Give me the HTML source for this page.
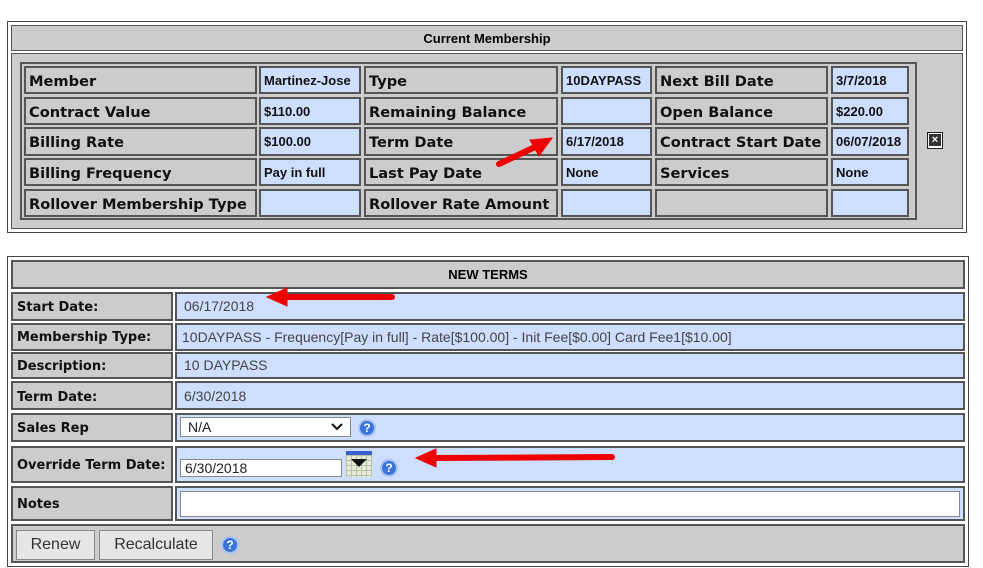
<!DOCTYPE html><html><head><style>
body{margin:0;width:983px;height:568px;background:#fff;position:relative;overflow:hidden;font-family:"Liberation Sans",Arial,sans-serif}
div{position:absolute;box-sizing:border-box}
.g{background:#ccc;border:2px solid #555}
.v{background:#cddeff;border:2px solid #555}
.L{font-family:"DejaVu Sans",Verdana,sans-serif;font-weight:bold;font-size:14.6px;color:#111;padding-left:3px;line-height:27px;white-space:nowrap}
.V{font-weight:bold;font-size:13px;color:#111;padding-left:3px;line-height:25px;white-space:nowrap}
.l2{font-family:"DejaVu Sans",Verdana,sans-serif;font-weight:bold;font-size:13px;color:#111;padding-left:4px;white-space:nowrap}
.v2{font-size:14px;color:#444;padding-left:7px;white-space:nowrap}
.q{width:18px;height:18px;border-radius:50%;background:#3b73d6;border:2px solid #a9c4f0;color:#fff;font-size:12px;font-weight:bold;text-align:center;line-height:14px}
.btn{background:#e6e6e6;border:1px solid #888;font-size:16px;color:#333;text-align:center;line-height:28px}
</style></head><body>
<div style="left:7px;top:21px;width:960px;height:212px;border:1px solid #444"></div>
<div class="g" style="left:11px;top:25px;width:952px;height:26px;border-width:1px;text-align:center;font-size:13px;font-weight:bold;line-height:25px">Current Membership</div>
<div class="g" style="left:11px;top:53px;width:952px;height:176px;border-width:1px"></div>
<div style="left:20px;top:62px;width:897px;height:158px;border:2px solid #555"></div>

<div class="g L" style="left:24px;top:66px;width:233px;height:28px">Member</div>
<div class="v V" style="left:259px;top:66px;width:102px;height:28px">Martinez-Jose</div>
<div class="g L" style="left:364px;top:66px;width:194px;height:28px">Type</div>
<div class="v V" style="left:561px;top:66px;width:91px;height:28px">10DAYPASS</div>
<div class="g L" style="left:655px;top:66px;width:173px;height:28px">Next Bill Date</div>
<div class="v V" style="left:831px;top:66px;width:78px;height:28px">3/7/2018</div>

<div class="g L" style="left:24px;top:97px;width:233px;height:28px">Contract Value</div>
<div class="v V" style="left:259px;top:97px;width:102px;height:28px">$110.00</div>
<div class="g L" style="left:364px;top:97px;width:194px;height:28px">Remaining Balance</div>
<div class="v V" style="left:561px;top:97px;width:91px;height:28px"></div>
<div class="g L" style="left:655px;top:97px;width:173px;height:28px">Open Balance</div>
<div class="v V" style="left:831px;top:97px;width:78px;height:28px">$220.00</div>

<div class="g L" style="left:24px;top:127px;width:233px;height:29px">Billing Rate</div>
<div class="v V" style="left:259px;top:127px;width:102px;height:29px">$100.00</div>
<div class="g L" style="left:364px;top:127px;width:194px;height:29px">Term Date</div>
<div class="v V" style="left:561px;top:127px;width:91px;height:29px">6/17/2018</div>
<div class="g L" style="left:655px;top:127px;width:173px;height:29px">Contract Start Date</div>
<div class="v V" style="left:831px;top:127px;width:78px;height:29px">06/07/2018</div>

<div class="g L" style="left:24px;top:158px;width:233px;height:28px">Billing Frequency</div>
<div class="v V" style="left:259px;top:158px;width:102px;height:28px">Pay in full</div>
<div class="g L" style="left:364px;top:158px;width:194px;height:28px">Last Pay Date</div>
<div class="v V" style="left:561px;top:158px;width:91px;height:28px">None</div>
<div class="g L" style="left:655px;top:158px;width:173px;height:28px">Services</div>
<div class="v V" style="left:831px;top:158px;width:78px;height:28px">None</div>

<div class="g L" style="left:24px;top:189px;width:233px;height:28px">Rollover Membership Type</div>
<div class="v V" style="left:259px;top:189px;width:102px;height:28px"></div>
<div class="g L" style="left:364px;top:189px;width:194px;height:28px">Rollover Rate Amount</div>
<div class="v V" style="left:561px;top:189px;width:91px;height:28px"></div>
<div class="g L" style="left:655px;top:189px;width:173px;height:28px"></div>
<div class="v V" style="left:831px;top:189px;width:78px;height:28px"></div>

<div style="left:927px;top:132px;width:16px;height:17px;background:#fff;border:1px solid #222"><div style="left:1px;top:1px;width:12px;height:12px;background:#333;color:#fff;font-size:11px;font-weight:bold;line-height:12px;text-align:center">×</div></div>

<div style="left:7px;top:256px;width:962px;height:311px;border:1px solid #444"></div>
<div class="g" style="left:11px;top:260px;width:954px;height:29px;text-align:center;font-size:13px;font-weight:bold;line-height:25px">NEW TERMS</div>

<div class="g l2" style="left:11px;top:292px;width:162px;height:29px;line-height:28px">Start Date:</div>
<div class="v v2" style="left:175px;top:292px;width:790px;height:29px;line-height:25px">06/17/2018</div>
<div class="g l2" style="left:11px;top:323px;width:162px;height:28px;line-height:26px">Membership Type:</div>
<div class="v v2" style="left:175px;top:323px;width:790px;height:28px;line-height:24px;padding-left:5px">10DAYPASS - Frequency[Pay in full] - Rate[$100.00] - Init Fee[$0.00] Card Fee1[$10.00]</div>
<div class="g l2" style="left:11px;top:352px;width:162px;height:27px;line-height:25px">Description:</div>
<div class="v v2" style="left:175px;top:352px;width:790px;height:27px;line-height:23px">10 DAYPASS</div>
<div class="g l2" style="left:11px;top:381px;width:162px;height:29px;line-height:29px">Term Date:</div>
<div class="v v2" style="left:175px;top:381px;width:790px;height:29px;line-height:27px">6/30/2018</div>
<div class="g l2" style="left:11px;top:413px;width:162px;height:29px;line-height:27px">Sales Rep</div>
<div class="v" style="left:175px;top:413px;width:790px;height:29px"></div>
<div style="left:180px;top:417px;width:171px;height:20px;background:#fff;border:1px solid #888;font-size:14px;line-height:18px;padding-left:7px;color:#222">N/A<svg style="position:absolute;right:7px;top:5px" width="12" height="8"><path d="M1 1L6 6L11 1" fill="none" stroke="#111" stroke-width="2"/></svg></div>
<div class="q" style="left:358px;top:419px">?</div>
<div class="g l2" style="left:11px;top:446px;width:162px;height:37px;line-height:35px">Override Term Date:</div>
<div class="v" style="left:175px;top:446px;width:790px;height:37px"></div>
<div style="left:180px;top:459px;width:162px;height:18px;background:#fff;border:1px solid #888;font-size:14px;line-height:16px;padding-left:4px;color:#222">6/30/2018</div>
<div style="left:346px;top:451px;width:26px;height:26px;border-top:4px solid #3a5fc8;background-color:#e4ecd8;background-image:linear-gradient(#b8c0a8 1px,transparent 1px),linear-gradient(90deg,#b8c0a8 1px,transparent 1px);background-size:5px 5px"><div style="left:5px;top:4px;width:0;height:0;border-left:8px solid transparent;border-right:8px solid transparent;border-top:8px solid #111"></div></div>
<div class="q" style="left:380px;top:459px">?</div>
<div class="g l2" style="left:11px;top:486px;width:162px;height:35px;line-height:33px">Notes</div>
<div class="v" style="left:175px;top:486px;width:790px;height:35px"></div>
<div style="left:180px;top:491px;width:780px;height:26px;background:#fff;border:1px solid #888"></div>
<div class="g" style="left:11px;top:524px;width:954px;height:39px"></div>
<div class="btn" style="left:16px;top:530px;width:79px;height:30px">Renew</div>
<div class="btn" style="left:99px;top:530px;width:114px;height:30px">Recalculate</div>
<div class="q" style="left:221px;top:536px">?</div>

<svg style="position:absolute;left:0;top:0" width="983" height="568">
<g fill="#e00" stroke="#e00" stroke-linecap="round">
<line x1="499" y1="164" x2="535" y2="147" stroke-width="6"/>
<polygon points="552,138 530,140 539,156"/>
<line x1="392" y1="297" x2="285" y2="297" stroke-width="6"/>
<polygon points="267,297 287,288 287,306"/>
<line x1="612" y1="457" x2="434" y2="458" stroke-width="6"/>
<polygon points="416,458 436,449 436,467"/>
</g></svg>
</body></html>
